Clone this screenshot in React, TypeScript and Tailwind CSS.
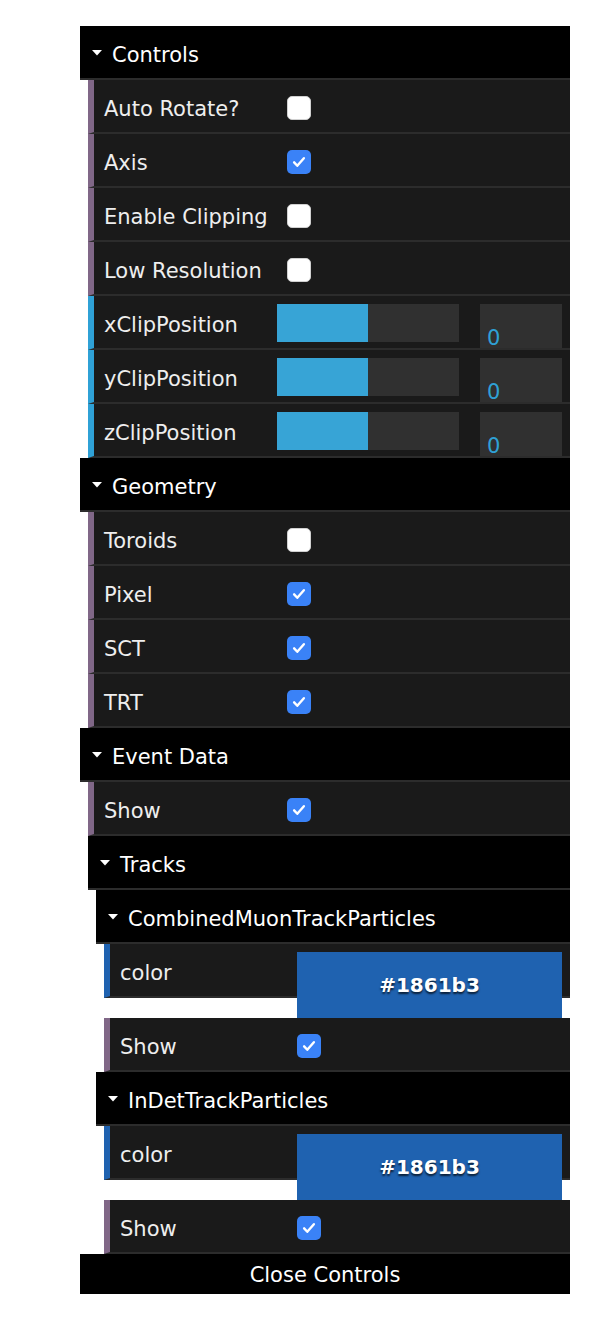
import React from "react";

function Caret() {
  return (
    <svg width="10" height="6" viewBox="0 0 10 6" className="shrink-0 mt-[2px]">
      <path d="M0 0h10L5 5.5z" fill="#ffffff" />
    </svg>
  );
}

function FolderTitle({ title }: { title: string }) {
  return (
    <div className="h-[54px] bg-black border-b-2 border-[#2c2c2c] flex items-center pl-[12px] gap-[10px] text-white">
      <Caret />
      <span className="pt-2">{title}</span>
    </div>
  );
}

function CheckBox({ checked }: { checked: boolean }) {
  if (!checked) {
    return <div className="w-[24px] h-[24px] rounded-[5px] bg-white border border-[#d0d0d0]" />;
  }
  return (
    <div className="w-[24px] h-[24px] rounded-[5px] bg-[#3a82f7] flex items-center justify-center">
      <svg width="18" height="18" viewBox="0 0 24 24">
        <path d="M5.5 12.5l4.2 4.5L18.5 7" fill="none" stroke="#ffffff" strokeWidth="3.2" strokeLinecap="round" strokeLinejoin="round" />
      </svg>
    </div>
  );
}

function BoolRow({ label, checked }: { label: string; checked: boolean }) {
  return (
    <div className="h-[54px] bg-[#1a1a1a] border-b-2 border-[#2c2c2c] border-l-[6px] border-l-[#806787] pl-[10px] pr-[8px] pt-1 flex items-center">
      <div className="w-[40%] pt-1 text-[#eeeeee] whitespace-nowrap">{label}</div>
      <div className="w-[60%] flex items-center">
        <CheckBox checked={checked} />
      </div>
    </div>
  );
}

function SliderRow({ label }: { label: string }) {
  return (
    <div className="h-[54px] bg-[#1a1a1a] border-b-2 border-[#2c2c2c] border-l-[6px] border-l-[#2fa1d6] pl-[10px] pr-[8px] pt-1 flex items-center">
      <div className="w-[40%] pt-1 text-[#eeeeee] whitespace-nowrap">{label}</div>
      <div className="w-[60%] h-full flex items-start">
        <div className="mt-1 -ml-[10px] w-[182px] h-[38px] bg-[#303030]">
          <div className="w-1/2 h-full bg-[#37a4d6]" />
        </div>
        <div className="mt-1 ml-auto w-[82px] h-[44px] bg-[#303030] text-[#2fa1d6] pl-[7px] pt-[24px] leading-none">
          0
        </div>
      </div>
    </div>
  );
}

function ColorRow() {
  return (
    <div className="relative h-[74px]">
      <div className="h-[54px] bg-[#1a1a1a] border-b-2 border-[#2c2c2c] border-l-[6px] border-l-[#1f62b0] pl-[10px] pr-[8px] pt-1 flex items-center">
        <div className="w-[40%] pt-1 text-[#eeeeee]">color</div>
      </div>
      <div className="absolute left-[193px] top-[8px] w-[265px] h-[66px] bg-[#1f62b0] flex items-center justify-center text-white font-bold text-[20px] [text-shadow:0_2px_2px_rgba(0,0,0,0.7)]">
        #1861b3
      </div>
    </div>
  );
}

export default function App() {
  return (
    <div className="min-h-screen bg-white pt-[26px] pl-[80px] font-['DejaVu_Sans',sans-serif] text-[21px]">
      <div className="w-[490px]">
        <FolderTitle title="Controls" />
        <div className="ml-[8px]">
          <BoolRow label="Auto Rotate?" checked={false} />
          <BoolRow label="Axis" checked={true} />
          <BoolRow label="Enable Clipping" checked={false} />
          <BoolRow label="Low Resolution" checked={false} />
          <SliderRow label="xClipPosition" />
          <SliderRow label="yClipPosition" />
          <SliderRow label="zClipPosition" />
        </div>

        <FolderTitle title="Geometry" />
        <div className="ml-[8px]">
          <BoolRow label="Toroids" checked={false} />
          <BoolRow label="Pixel" checked={true} />
          <BoolRow label="SCT" checked={true} />
          <BoolRow label="TRT" checked={true} />
        </div>

        <FolderTitle title="Event Data" />
        <div className="ml-[8px]">
          <BoolRow label="Show" checked={true} />
          <FolderTitle title="Tracks" />
          <div className="ml-[8px]">
            <FolderTitle title="CombinedMuonTrackParticles" />
            <div className="ml-[8px]">
              <ColorRow />
              <BoolRow label="Show" checked={true} />
            </div>
            <FolderTitle title="InDetTrackParticles" />
            <div className="ml-[8px]">
              <ColorRow />
              <BoolRow label="Show" checked={true} />
            </div>
          </div>
        </div>

        <div className="h-[40px] bg-black text-white flex items-center justify-center pt-1">Close Controls</div>
      </div>
    </div>
  );
}
